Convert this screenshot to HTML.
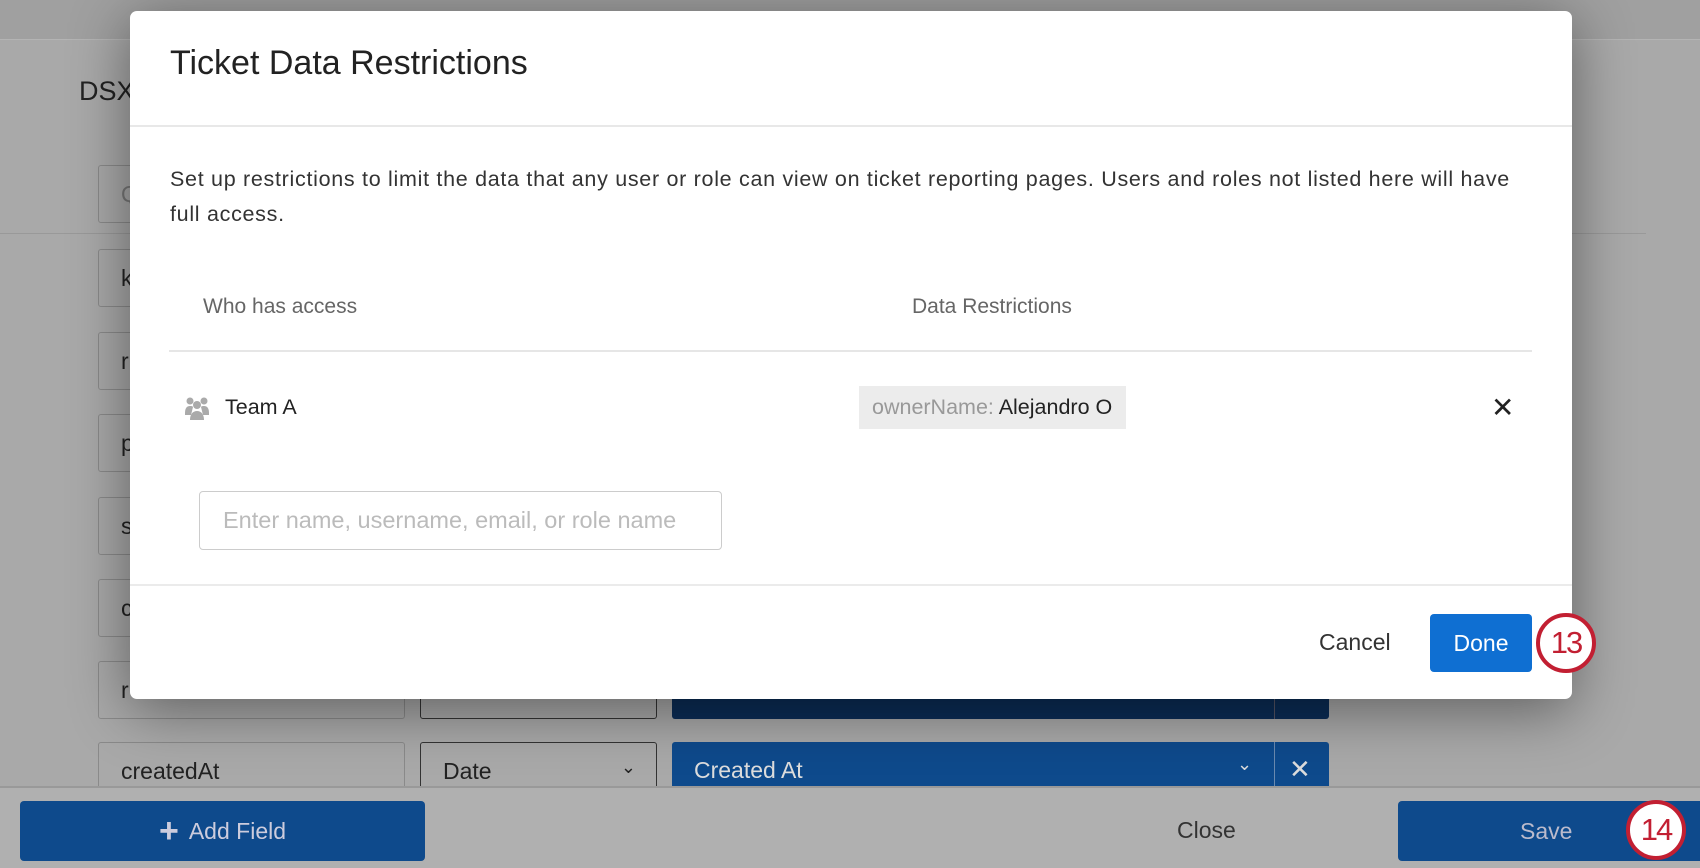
<!DOCTYPE html>
<html><head><meta charset="utf-8"><style>
*{box-sizing:border-box;margin:0;padding:0}
body{width:1700px;height:868px;overflow:hidden;background:#a9a9a9;font-family:"Liberation Sans",sans-serif;position:relative}
.abs{position:absolute}
.top{left:0;top:0;width:1700px;height:40px;background:#a0a0a0;border-bottom:1px solid #b4b4b4}
.hl{left:0;top:233px;width:1646px;height:1px;background:#999}
.box{position:absolute;border:1px solid #8a8a8a;border-radius:3px;height:58px;font-size:23px;color:#222;padding:15px 0 0 22px}
.sel{position:absolute;border:1.5px solid #333;border-radius:3px;height:58px;font-size:23px;color:#222;padding:15px 0 0 22px}
.blue{position:absolute;background:#0e4a8c;border-radius:3px;height:58px;color:#ddd;font-size:23px;padding:15px 0 0 22px}
.modal{left:130px;top:11px;width:1442px;height:688px;background:#fff;border-radius:7px;box-shadow:0 10px 60px rgba(0,0,0,.45)}
.badge{position:absolute;width:60px;height:60px;border-radius:50%;border:4px solid #c21f32;background:#fff;color:#c21f32;font-size:31px;text-align:center;line-height:52px;letter-spacing:-2px}
</style></head><body>
<div class="abs top"></div>
<div class="abs" style="left:79px;top:76px;font-size:27px;color:#222">DSX</div>
<div class="abs hl"></div>
<div class="box" style="left:98px;top:165px;width:307px;color:#777">Q</div>
<div class="box" style="left:98px;top:249px;width:307px">k</div>
<div class="box" style="left:98px;top:332px;width:307px">r</div>
<div class="box" style="left:98px;top:414px;width:307px">p</div>
<div class="box" style="left:98px;top:497px;width:307px">s</div>
<div class="box" style="left:98px;top:579px;width:307px">c</div>
<div class="box" style="left:98px;top:661px;width:307px">r</div>
<div class="sel" style="left:420px;top:661px;width:237px"></div>
<div class="blue" style="left:672px;top:661px;width:657px;background:#0b2d57"><div class="abs" style="left:602px;top:0;width:1px;height:58px;background:#556"></div></div>
<div class="box" style="left:98px;top:742px;width:307px">createdAt</div>
<div class="sel" style="left:420px;top:742px;width:237px">Date<span class="abs" style="right:20px;top:14px;font-size:18px">&#8964;</span></div>
<div class="blue" style="left:672px;top:742px;width:657px">Created At<span class="abs" style="left:565px;top:12px;font-size:18px">&#8964;</span><div class="abs" style="left:602px;top:0;width:1px;height:58px;background:#6a8ab0"></div><span class="abs" style="left:617px;top:12px;font-size:26px">&#x2715;</span></div>
<div class="abs" style="left:0;top:786px;width:1700px;height:82px;background:#b0b0b0;border-top:2px solid #999"></div>
<div class="abs" style="left:20px;top:801px;width:405px;height:60px;background:#0e4a8c;border-radius:4px;color:#ccd;font-size:23px;text-align:center;line-height:60px"><span style="font-size:34px;font-weight:bold;vertical-align:-3px;margin-right:10px">+</span>Add Field</div>
<div class="abs" style="left:1177px;top:817px;font-size:23px;color:#333">Close</div>
<div class="abs" style="left:1398px;top:801px;width:302px;height:60px;background:#0e4a8c;border-radius:4px 0 0 4px;color:#bbc;font-size:23px;line-height:60px;padding-left:122px">Save</div>
<div class="badge" style="left:1626px;top:800px">14</div>

<div class="abs modal">
 <div class="abs" style="left:40px;top:33px;font-size:34px;color:#222">Ticket Data Restrictions</div>
 <div class="abs" style="left:0;top:114px;width:1442px;height:2px;background:#e8e8e8"></div>
 <div class="abs" style="left:40px;top:151px;font-size:21.5px;letter-spacing:0.7px;color:#333;line-height:35px;white-space:nowrap">Set up restrictions to limit the data that any user or role can view on ticket reporting pages. Users and roles not listed here will have<br>full access.</div>
 <div class="abs" style="left:73px;top:284px;font-size:21px;color:#666">Who has access</div>
 <div class="abs" style="left:782px;top:284px;font-size:21px;color:#666">Data Restrictions</div>
 <div class="abs" style="left:39px;top:339px;width:1363px;height:2px;background:#e6e6e6"></div>
 <svg class="abs" style="left:54px;top:384px" width="26" height="26" viewBox="0 0 26 26" fill="#aaa"><circle cx="6" cy="6" r="3.5"/><circle cx="20" cy="6" r="3.5"/><circle cx="13" cy="10" r="4"/><path d="M1 18c0-5 2-7 5-7s3 1 3 1l-2 8H1z"/><path d="M25 18c0-5-2-7-5-7s-3 1-3 1l2 8h6z"/><path d="M6 25c0-6 3-9 7-9s7 3 7 9z"/></svg>
 <div class="abs" style="left:95px;top:384px;font-size:21.5px;color:#222">Team A</div>
 <div class="abs" style="left:729px;top:375px;width:267px;height:43px;background:#ececec;font-size:21.5px;line-height:43px;padding-left:13px;white-space:nowrap"><span style="color:#999">ownerName:</span> <span style="color:#222">Alejandro O</span></div>
 <div class="abs" style="left:1361px;top:380px;font-size:28px;color:#222">&#x2715;</div>
 <div class="abs" style="left:69px;top:480px;width:523px;height:59px;border:1.5px solid #ccc;border-radius:4px;font-size:23.5px;color:#bbb;padding:15px 0 0 23px;white-space:nowrap">Enter name, username, email, or role name</div>
 <div class="abs" style="left:0;top:573px;width:1442px;height:2px;background:#ebebeb"></div>
 <div class="abs" style="left:1189px;top:618px;font-size:23px;color:#333">Cancel</div>
 <div class="abs" style="left:1300px;top:603px;width:102px;height:58px;background:#0f6fd2;border-radius:4px;color:#fff;font-size:23px;text-align:center;line-height:58px">Done</div>
</div>
<div class="badge" style="left:1536px;top:613px">13</div>
</body></html>
